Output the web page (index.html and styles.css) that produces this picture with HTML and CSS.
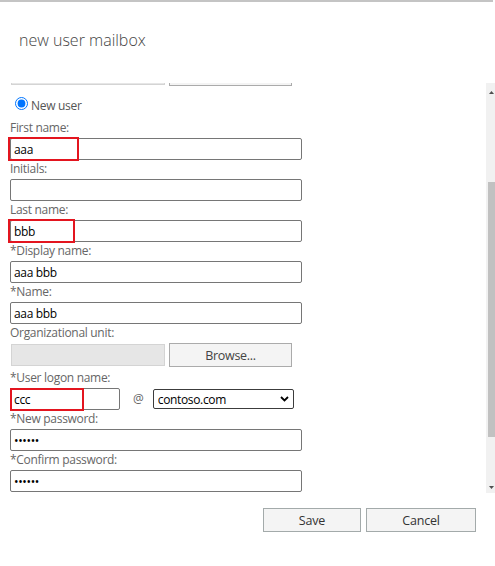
FILE: index.html
```html
<!DOCTYPE html>
<html lang="en">
<head>
<meta charset="utf-8">
<title>new user mailbox</title>
<link rel="stylesheet" href="styles.css">
</head>
<body>
<div class="dialog">
  <div class="topline"></div>
  <h1 class="title">new user mailbox</h1>
  <div class="scroll">
    <div class="content">
      <div class="form">
        <div class="pair">
          <div class="ro-box"></div>
          <button class="browse" type="button" aria-label="Browse"></button>
        </div>
        <label class="radio-row"><input type="radio" name="t" checked>New user</label>

        <div class="field">
          <div class="label">First name:</div>
          <div class="wrap">
            <input class="text" type="text" value="aaa">
            <span class="mark mark-first"></span>
          </div>
        </div>
        <div class="field">
          <div class="label">Initials:</div>
          <div class="wrap"><input class="text" type="text" value=""></div>
        </div>
        <div class="field">
          <div class="label">Last name:</div>
          <div class="wrap">
            <input class="text" type="text" value="bbb">
            <span class="mark mark-last"></span>
          </div>
        </div>
        <div class="field">
          <div class="label">*Display name:</div>
          <div class="wrap"><input class="text" type="text" value="aaa bbb"></div>
        </div>
        <div class="field">
          <div class="label">*Name:</div>
          <div class="wrap"><input class="text" type="text" value="aaa bbb"></div>
        </div>
        <div class="field field-ou">
          <div class="label">Organizational unit:</div>
          <div class="pair pair-ou">
            <div class="ro-box"></div>
            <button class="browse" type="button">Browse...</button>
          </div>
        </div>
        <div class="field">
          <div class="label">*User logon name:</div>
          <div class="logon">
            <div class="wrap wrap-short">
              <input class="text short" type="text" value="ccc">
              <span class="mark mark-logon"></span>
            </div>
            <span class="at">@</span>
            <div class="select-wrap">
              <select class="domain"><option>contoso.com</option></select>
              <svg class="chev" width="9" height="6" viewBox="0 0 9 6"><path d="M1 1 L4.5 4.5 L8 1" fill="none" stroke="#000" stroke-width="1.8"/></svg>
            </div>
          </div>
        </div>
        <div class="field">
          <div class="label">*New password:</div>
          <div class="wrap"><input class="text" type="password" value="123456"></div>
        </div>
        <div class="field">
          <div class="label">*Confirm password:</div>
          <div class="wrap"><input class="text" type="password" value="123456"></div>
        </div>
      </div>
    </div>
    <div class="scrollbar">
      <svg class="arrow" width="5" height="3" viewBox="0 0 5 3"><path d="M0 3 L2.5 0 L5 3 Z" fill="#505050"/></svg>
      <div class="thumb"></div>
      <div class="spacer"></div>
      <svg class="arrow" width="5" height="3" viewBox="0 0 5 3"><path d="M0 0 L2.5 3 L5 0 Z" fill="#505050"/></svg>
    </div>
  </div>
  <div class="footer">
    <button class="btn btn-save" type="button">Save</button>
    <button class="btn btn-cancel" type="button">Cancel</button>
  </div>
</div>
</body>
</html>
```

FILE: styles.css
```css
html, body {
  margin: 0;
  padding: 0;
  background: #ffffff;
}
body {
  width: 495px;
  height: 566px;
  overflow: hidden;
  font-family: "Open Sans", "Noto Sans", "Liberation Sans", sans-serif;
  font-size: 12px;
  letter-spacing: -0.3px;
  color: #666666;
}
.dialog {
  width: 495px;
  height: 566px;
}
.topline {
  width: 493px;
  height: 2px;
  background: #c4c4c4;
}
.title {
  margin: 0;
  padding: 27px 0 0 19px;
  height: 22px;
  line-height: 22px;
  font-size: 16px;
  font-weight: 300;
  letter-spacing: 0;
  color: #444444;
  margin-bottom: 32px;
}
.scroll {
  display: flex;
  height: 410px;
}
.content {
  flex: 1;
  overflow: hidden;
  padding-left: 10px;
}
.form {
  margin-top: -21px;
}
.pair {
  display: flex;
  align-items: flex-start;
  height: 24px;
}
.ro-box {
  box-sizing: border-box;
  width: 154px;
  height: 22px;
  margin: 1px 0 0 1px;
  background: #e6e6e6;
  border: 1px solid #d4d4d4;
}
.browse {
  box-sizing: border-box;
  width: 123px;
  height: 24px;
  margin: 0 0 0 4px;
  padding: 0;
  background: #f4f4f4;
  border: 1px solid #ababab;
  border-radius: 0;
  font-family: inherit;
  font-size: 12.5px;
  letter-spacing: -0.3px;
  color: #444444;
}
.radio-row {
  display: block;
  margin: 8px 0 6px 0;
  line-height: 19px;
  height: 19px;
  font-size: 12px;
  color: #555555;
}
.radio-row input {
  margin: 3px 3px 0 5px;
  accent-color: #0075ff;
}
.field {
  height: 41px;
}
.field-ou {
  height: 45px;
}
.pair-ou {
  margin-top: 0;
}
.label {
  line-height: 17px;
  height: 17px;
  padding-bottom: 2px;
  color: #666666;
  white-space: nowrap;
}
.wrap {
  position: relative;
  width: 292px;
}
.wrap-short {
  width: 110px;
}
.text {
  display: block;
  box-sizing: border-box;
  width: 292px;
  height: 22px;
  margin: 0;
  padding: 0 3px;
  border: 1px solid #767676;
  border-radius: 2px;
  background: #ffffff;
  font-family: inherit;
  font-size: 12px;
  letter-spacing: -0.35px;
  color: #000000;
}
.text.short {
  width: 110px;
}
.mark {
  position: absolute;
  box-sizing: border-box;
  border: 2px solid #e3151f;
}
.mark-first {
  left: -2px;
  top: -1px;
  width: 71px;
  height: 24px;
}
.mark-last {
  left: -2px;
  top: -1px;
  width: 67px;
  height: 24px;
}
.mark-logon {
  left: 0;
  top: 0;
  width: 74px;
  height: 23px;
}
.logon {
  display: flex;
  align-items: flex-start;
  height: 22px;
}
.at {
  line-height: 22px;
  margin: 0 9px 0 13px;
  color: #666666;
  letter-spacing: 0;
}
.select-wrap {
  position: relative;
  width: 141px;
  height: 20px;
  margin-top: 1px;
}
.domain {
  appearance: none;
  -webkit-appearance: none;
  box-sizing: border-box;
  width: 141px;
  height: 20px;
  margin: 0;
  padding: 0 0 0 4px;
  border: 1px solid #3c3c3c;
  border-radius: 2px;
  background: #ffffff;
  font-family: inherit;
  font-size: 12px;
  letter-spacing: -0.35px;
  color: #000000;
}
.chev {
  position: absolute;
  right: 5px;
  top: 7px;
}
.scrollbar {
  width: 9px;
  background: #f1f1f1;
  display: flex;
  flex-direction: column;
  align-items: center;
}
.arrow {
  display: block;
  margin-left: 1px;
}
.scrollbar .arrow:first-child {
  margin-top: 8px;
}
.scrollbar .arrow:last-child {
  margin-bottom: 4px;
}
.thumb {
  align-self: flex-end;
  width: 7px;
  height: 255px;
  margin-top: 88px;
  background: #c1c1c1;
}
.spacer {
  flex: 1;
}
.footer {
  display: flex;
  justify-content: flex-end;
  gap: 5px;
  padding: 15px 19px 0 0;
}
.btn {
  box-sizing: border-box;
  height: 24px;
  margin: 0;
  padding: 0;
  background: #f4f4f4;
  border: 1px solid #a3aaaa;
  border-radius: 0;
  font-family: inherit;
  font-size: 12.5px;
  letter-spacing: -0.2px;
  color: #333333;
}
.btn-save {
  width: 98px;
}
.btn-cancel {
  width: 110px;
}
```
